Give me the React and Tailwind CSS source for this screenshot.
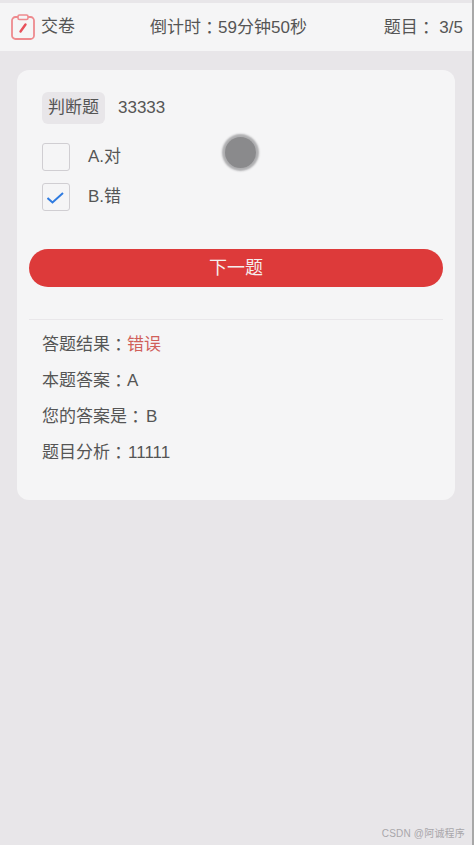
const font = { fontFamily: '"Liberation Sans", "Noto Sans CJK SC", sans-serif' };

function Colon() {
  return <span className="font-['Noto_Sans_CJK_TC'] relative top-[1px]">：</span>;
}

function Check({ checked }) {
  return (
    <div className="w-[28px] h-[28px] shrink-0 rounded-[3px] border border-[#d0ced2] bg-[#f5f5f6] flex items-center justify-center">
      {checked && (
        <svg width="18" height="14" viewBox="0 0 18 14" fill="none">
          <path d="M0.5 8 L5.5 12.5 L16 3" stroke="#2f7be0" strokeWidth="2" />
        </svg>
      )}
    </div>
  );
}

function Row({ children }) {
  return <div className="h-[36px] leading-[36px] whitespace-pre">{children}</div>;
}

export default function App() {
  return (
    <div style={font} className="h-[845px] w-[474px] overflow-hidden bg-[#e8e6e9] text-[#555] flex flex-col relative">
      <div className="mt-[3px] h-[48px] bg-[#f5f5f6] flex items-center justify-between px-[11px] text-[17px]">
        <div className="flex items-center gap-[6px] w-[65px] whitespace-nowrap">
          <svg width="24" height="26" viewBox="0 0 24 26" fill="none" className="shrink-0">
            <rect x="1" y="3" width="22" height="22" rx="3.5" stroke="#ee8a8e" strokeWidth="1.8" />
            <rect x="7" y="1" width="10" height="4.5" rx="1.5" fill="#f5f5f6" stroke="#ee8a8e" strokeWidth="1.6" />
            <path d="M9.5 17.5 L14.5 10.5" stroke="#e8505a" strokeWidth="2.4" strokeLinecap="round" />
          </svg>
          <span>交卷</span>
        </div>
        <span className="w-[159px] text-center whitespace-nowrap">倒计时<Colon />59分钟50秒</span>
        <span className="w-[82px] text-right whitespace-nowrap">题目<Colon /> 3/5</span>
      </div>

      <div className="mt-[19px] ml-[17px] w-[438px] h-[430px] bg-[#f5f5f6] rounded-[12px] pt-[22px] px-[12px]">
        <div className="pl-[13px] flex items-center h-[32px] text-[17px]">
          <span className="h-[32px] w-[63px] rounded-[6px] bg-[#e8e6e9] flex items-center justify-center">判断题</span>
          <span className="ml-[13px]">33333</span>
        </div>

        <div className="pl-[13px] mt-[19px] flex flex-col gap-[12px] text-[17px]">
          <div className="flex items-center gap-[18px] h-[28px]">
            <Check />
            <span>A.对</span>
          </div>
          <div className="flex items-center gap-[18px] h-[28px]">
            <Check checked />
            <span>B.错</span>
          </div>
        </div>

        <button className="mt-[38px] w-[414px] h-[38px] pt-[1px] rounded-full bg-[#dd3a3a] text-[#f5eeee] text-[18px] flex items-center justify-center">
          下一题
        </button>

        <div className="mt-[32px] w-[414px] border-t border-[#e9e7ea] pt-[5px] pl-[13px] text-[17px]">
          <Row>答题结果<Colon /><span className="text-[#d0605a]">错误</span></Row>
          <Row>本题答案<Colon />A</Row>
          <Row>您的答案是<Colon /><span className="ml-[2px]">B</span></Row>
          <Row>题目分析<Colon /><span className="ml-[1px]">11111</span></Row>
        </div>
      </div>

      <div className="absolute left-[225px] top-[137px] w-[31px] h-[31px] rounded-full bg-[#8a8a8c] shadow-[0_0_2px_3px_#aeaeb0]" />
      <div className="absolute right-[9px] bottom-[4px] text-[10px] tracking-[0.2px] text-[#a9a7ab]">CSDN @阿诚程序</div>
      <div className="absolute right-0 top-0 bottom-0 w-[2px] bg-[#a8a8a8]" />
    </div>
  );
}
